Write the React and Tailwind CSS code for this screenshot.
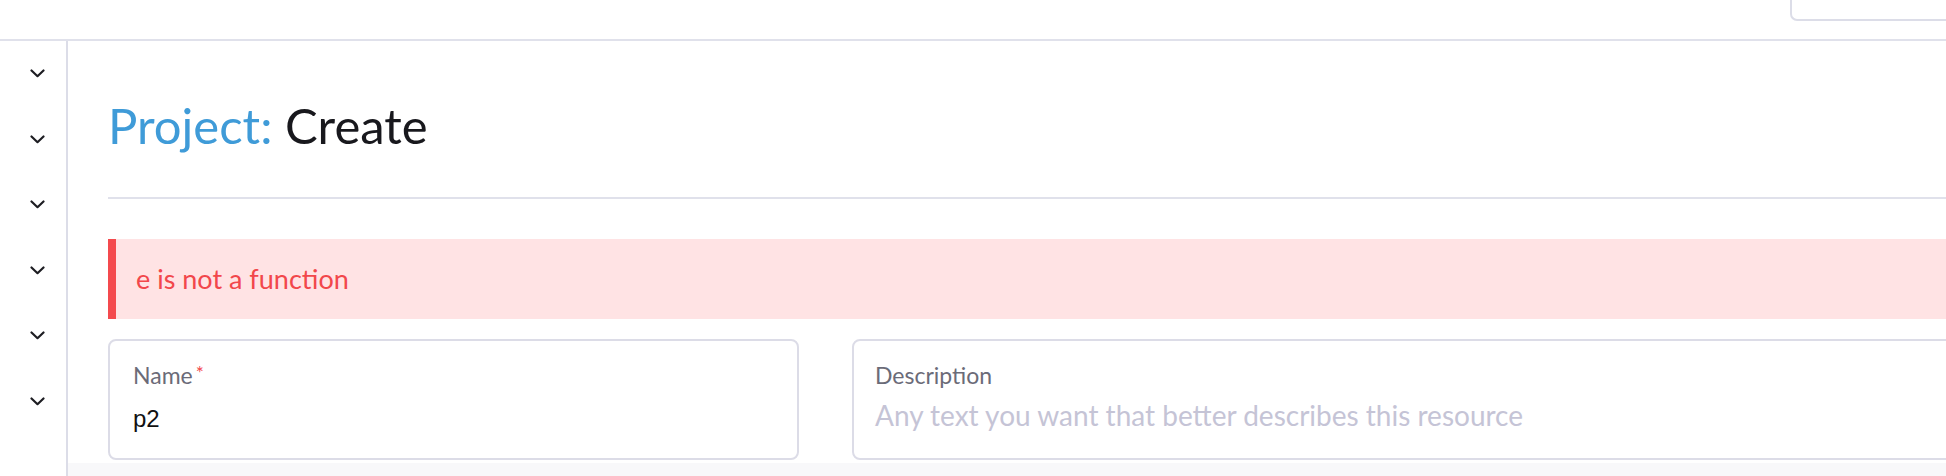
import React from 'react'

const Chevron = () => (
  <svg width="15" height="9" viewBox="0 0 15 9" fill="none" stroke="#1d1d22" strokeWidth="2.2" strokeLinecap="round" strokeLinejoin="round">
    <path d="M1.5 1.5 L7.5 7.2 L13.5 1.5" />
  </svg>
)

export default function App() {
  const rows = [0, 1, 2, 3, 4, 5]
  return (
    <div className="w-[1946px] h-[476px] overflow-hidden bg-white relative" style={{ fontFamily: 'Lato, "Noto Sans", sans-serif' }}>
      {/* top bar */}
      <div className="h-[41px] border-b-2 border-[#e0e1eb] flex justify-end">
        <div className="w-[156px] h-[21px] border-2 border-t-0 border-r-0 border-[#dcdde8] rounded-bl-[7px]" />
      </div>

      <div className="flex">
        {/* sidebar */}
        <aside className="w-[68px] shrink-0 border-r-2 border-[#dcdde8] h-[440px] flex flex-col">
          {rows.map(i => (
            <div key={i} className="h-[65.5px] shrink-0 flex items-center pl-[30px]">
              <Chevron />
            </div>
          ))}
        </aside>

        {/* main */}
        <main className="flex-1 pl-[40px] min-w-0">
          <h1 className="pt-[55px] text-[49px] leading-[59px] font-normal text-[#18181d] whitespace-nowrap">
            <span className="text-[#3f9bd8]">Project:</span> Create
          </h1>

          <div className="mt-[42px] h-[2px] bg-[#e0e1eb] w-[1900px]" />

          <div className="mt-[40px] h-[80px] bg-[#ffe3e4] flex items-center w-[1900px]">
            <div className="w-[8px] h-full bg-[#f44a4e]" />
            <span className="pl-[20px] text-[27px] leading-[32px] text-[#f2474b] whitespace-nowrap">e is not a function</span>
          </div>

          <div className="mt-[20px] flex gap-[53px] w-[2000px]">
            <div className="w-[691px] h-[121px] shrink-0 border-2 border-[#dcdce7] rounded-[8px] pl-[23px] pt-[20px]">
              <div className="text-[23px] leading-[28px] text-[#6b6b78] flex items-start">
                Name<span className="text-[#f2474b] text-[19px] leading-[19px] ml-[3px] mt-[2px]">*</span>
              </div>
              <div className="mt-[15px] text-[24px] leading-[30px] text-[#111]" style={{ fontFamily: '"Liberation Sans", Arial, sans-serif' }}>p2</div>
            </div>
            <div className="w-[1200px] h-[121px] shrink-0 border-2 border-[#dcdce7] rounded-[8px] pl-[21px] pt-[20px]">
              <div className="text-[23px] leading-[28px] text-[#6b6b78]">Description</div>
              <div className="mt-[10px] text-[28px] leading-[33px] text-[#c5c4d6] whitespace-nowrap">Any text you want that better describes this resource</div>
            </div>
          </div>
        </main>
      </div>

      <div className="absolute left-[68px] right-0 bottom-0 h-[13px] bg-[#f8f8fa]" />
    </div>
  )
}
